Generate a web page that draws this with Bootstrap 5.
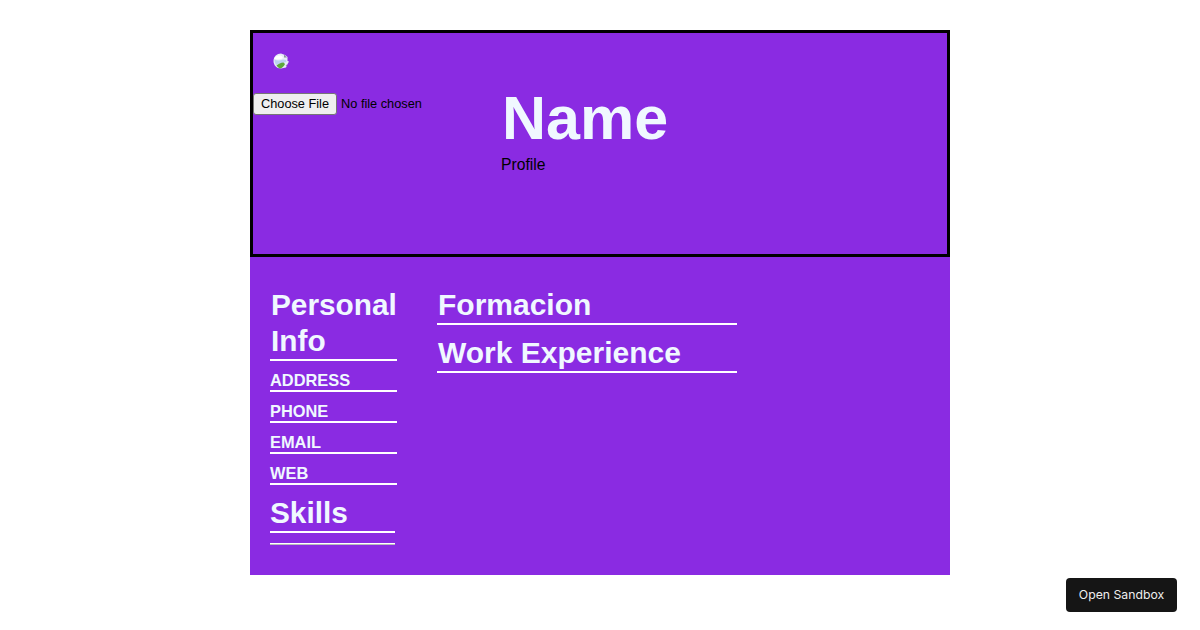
<!DOCTYPE html>
<html lang="en">
<head>
<meta charset="utf-8">
<title>CV</title>
<link rel="stylesheet" href="https://cdn.jsdelivr.net/npm/bootstrap@5.3.0/dist/css/bootstrap.min.css">
<style>
body{background:#fff;font-family:"Liberation Sans",Arial,sans-serif;color:#000;}
.cv-sheet{width:700px;margin:30px auto 0;background:#8a2be2;}
.cv-head{height:227px;border:3px solid #000;}
.cv-left{width:248px;}
.cv-photo{display:block;width:16px;height:16px;margin:20px 0 0 20px;}
.cv-file{display:block;margin-top:24px;font-size:12.75px;line-height:15px;font-family:"Liberation Sans",Arial,sans-serif;color:#000;}
.cv-file::file-selector-button{background:#efefef;border:1px solid #767676;border-radius:3px;padding:1px 7px 3px;margin-right:4px;height:22px;line-height:15px;color:#000;}
.cv-name{font-size:61px;line-height:74px;font-weight:700;color:#f0f8ff;margin:48px 0 0;padding-left:1px;}
.cv-profile{font-size:15.7px;line-height:18px;margin:1px 0 0;}
.cv-main{padding:30px 20px 30px;height:318px;}
.cv-side{width:127px;}
.cv-body{width:300px;margin-left:40px;}
.cv-h2{font-size:30px;line-height:36px;font-weight:700;color:#f0f8ff;border-bottom:2px solid #fff;margin:0 0 10px;}
.cv-indent{padding-left:1px;}
.cv-side .cv-indent{font-size:29.8px;}
.cv-h3{font-size:16.4px;line-height:19px;font-weight:700;color:#f0f8ff;border-bottom:2px solid #fff;margin:0 0 10px;}
.cv-skill{width:125px;font-size:29.8px;}
.cv-skill-line{width:125px;height:2px;background:#fff;border:0;border-bottom:1px solid #bbb;opacity:1;margin:0;}
.cv-open{right:23px;bottom:18px;width:111px;height:34px;background:#151515;color:#eee;font-family:Inter,sans-serif;font-size:12.25px;border:0;border-radius:4px;padding:0;}
</style>
</head>
<body>
<div class="cv-sheet">
  <header class="cv-head d-flex">
    <div class="cv-left flex-shrink-0">
      <svg class="cv-photo" viewBox="0 0 16 16" role="img" aria-label="Photo">
        <path d="M8 .5C4 .5.5 3.5.5 8c0 4 3 7.500 7.500 7.500l5-1 1-2.500 2-3.500-1.500-.5V4L12 2z" fill="#e6ecf8"/>
        <path d="M1 5.500C3 2.500 6 2 8.500 3c1 .5 1.500 1.500 1 2.500-2.500 1-6 1.500-8.500 0z" fill="#fff"/>
        <path d="M1.500 6.500C4 8 7.500 7.500 10 6.500L13 7l.5 2-4 1C7 10.500 5 11 3.500 12 2 10.500 1.500 8.500 1.500 6.500z" fill="#bcd0f2"/>
        <path d="M3.500 12.500C5 11 8 9.500 10.500 9.500L12 11c-1 2-2.500 4-4.500 4.500-1.500 0-3-1.500-4-3z" fill="#5ea83a"/>
        <path d="M11 1.500l3 3h-3z" fill="#8a8f9c"/>
        <path d="M12.500 12.500l1.500-1v1.500z" fill="#8a8f9c"/>
      </svg>
      <input class="cv-file" type="file" aria-label="Photo file">
    </div>
    <div>
      <h1 class="cv-name">Name</h1>
      <p class="cv-profile">Profile</p>
    </div>
  </header>
  <main class="cv-main d-flex">
    <section class="cv-side">
      <h2 class="cv-h2 cv-indent">Personal Info</h2>
      <h3 class="cv-h3">ADDRESS</h3>
      <h3 class="cv-h3">PHONE</h3>
      <h3 class="cv-h3">EMAIL</h3>
      <h3 class="cv-h3">WEB</h3>
      <h2 class="cv-h2 cv-skill">Skills</h2>
      <hr class="cv-skill-line">
    </section>
    <section class="cv-body">
      <h2 class="cv-h2 cv-indent">Formacion</h2>
      <h2 class="cv-h2 cv-indent">Work Experience</h2>
    </section>
  </main>
</div>
<button type="button" class="btn cv-open position-fixed">Open Sandbox</button>
<script src="https://cdn.jsdelivr.net/npm/bootstrap@5.3.0/dist/js/bootstrap.bundle.min.js"></script>
</body>
</html>
